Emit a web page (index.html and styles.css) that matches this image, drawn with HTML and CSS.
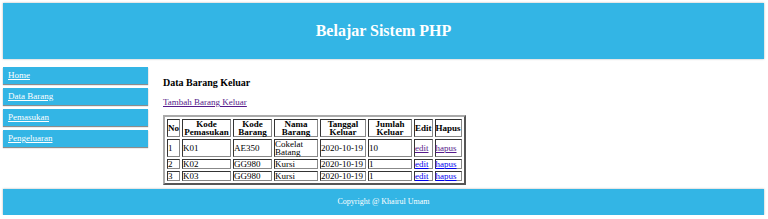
FILE: index.html
```html
<!DOCTYPE html>
<html lang="id">
<head>
    <meta charset="UTF-8">
    <meta name="viewport" content="width=device-width, initial-scale=1.0">
    <title>Belajar Sistem PHP</title>
    <link rel="stylesheet" href="styles.css">
</head>
<body>
    <div class="wrap">
        <div class="header">
            <h1>Belajar Sistem PHP</h1>
        </div>
        <div class="main">
            <div class="sidebar">
                <a class="menu" href="#">Home</a>
                <a class="menu" href="#">Data Barang</a>
                <a class="menu" href="#">Pemasukan</a>
                <a class="menu" href="#">Pengeluaran</a>
            </div>
            <div class="content">
                <h3>Data Barang Keluar</h3>
                <a class="tambah" href="#">Tambah Barang Keluar</a>
                <table class="data">
                    <tr>
                        <th class="c-no">No</th>
                        <th class="c-kp">Kode<br>Pemasukan</th>
                        <th class="c-kb">Kode<br>Barang</th>
                        <th class="c-nama">Nama<br>Barang</th>
                        <th class="c-tgl">Tanggal<br>Keluar</th>
                        <th class="c-jml">Jumlah<br>Keluar</th>
                        <th class="c-edit">Edit</th>
                        <th class="c-hapus">Hapus</th>
                    </tr>
                    <tr>
                        <td>1</td>
                        <td>K01</td>
                        <td>AE350</td>
                        <td>Cokelat<br>Batang</td>
                        <td>2020-10-19</td>
                        <td>10</td>
                        <td><a class="visited" href="#">edit</a></td>
                        <td><a class="visited" href="#">hapus</a></td>
                    </tr>
                    <tr>
                        <td>2</td>
                        <td>K02</td>
                        <td>GG980</td>
                        <td>Kursi</td>
                        <td>2020-10-19</td>
                        <td>1</td>
                        <td><a href="#">edit</a></td>
                        <td><a href="#">hapus</a></td>
                    </tr>
                    <tr>
                        <td>3</td>
                        <td>K03</td>
                        <td>GG980</td>
                        <td>Kursi</td>
                        <td>2020-10-19</td>
                        <td>1</td>
                        <td><a href="#">edit</a></td>
                        <td><a href="#">hapus</a></td>
                    </tr>
                </table>
            </div>
        </div>
        <div class="footer">Copyright @ Khairul Umam</div>
    </div>
</body>
</html>
```

FILE: styles.css
```css
body {
    margin: 0;
    font-family: "Liberation Serif", "Times New Roman", serif;
    background-color: #fff;
    color: #000;
}
.wrap {
    padding: 3px 4px 0 3px;
}
.header {
    background-color: #33b5e5;
    height: 56px;
    display: flex;
    justify-content: center;
    align-items: center;
    box-shadow: 0 0 2px rgba(0,0,0,0.3);
}
.header h1 {
    margin: 0;
    color: #fff;
    font-size: 16px;
}
.main {
    display: flex;
    padding-top: 8px;
}
.sidebar {
    width: 145px;
    display: flex;
    flex-direction: column;
    gap: 4px;
}
.menu {
    display: block;
    height: 17px;
    line-height: 16px;
    padding-left: 5px;
    background-color: #33b5e5;
    color: #fff;
    font-size: 9px;
    box-shadow: 0 1px 1px rgba(0,0,0,0.45);
}
.content {
    padding-left: 15px;
    font-size: 9px;
}
.content h3 {
    margin: 10px 0 9px;
    font-size: 10px;
}
.tambah {
    color: #551a8b;
    display: block;
    margin-bottom: 8px;
}
.data {
    border: 2px outset #aaa;
    border-spacing: 2px;
    font-size: 9px;
    color: #000;
}
.data th, .data td {
    border: 1px inset #888;
    padding: 0;
    line-height: 8px;
    color: #000;
}
.data a {
    color: #0000ee;
}
.data a.visited {
    color: #551a8b;
}
.c-no { width: 9px; }
.c-kp { width: 47px; }
.c-kb { width: 37px; }
.c-nama { width: 42px; }
.c-tgl { width: 44px; }
.c-jml { width: 42px; }
.c-edit { width: 14px; }
.c-hapus { width: 21px; }
.footer {
    margin-top: 4px;
    background-color: #33b5e5;
    height: 26px;
    line-height: 26px;
    text-align: center;
    color: #fff;
    font-size: 8px;
    box-shadow: 0 0 2px rgba(0,0,0,0.3);
}
```
